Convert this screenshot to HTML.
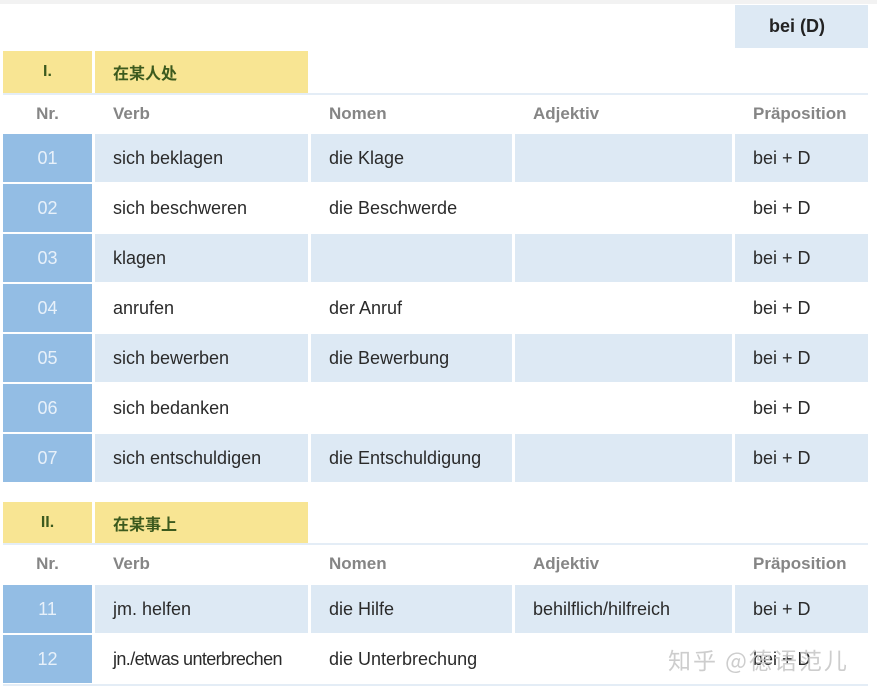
<!DOCTYPE html>
<html><head><meta charset="utf-8"><style>
body{margin:0;width:877px;height:691px;background:#fff;position:relative;overflow:hidden;font-family:"Liberation Sans","Noto Sans CJK SC",sans-serif;}
div{position:absolute;box-sizing:border-box;}
.c{display:flex;align-items:center;font-size:18px;color:#2a2a2a;padding-left:18px;}
.n{background:#93bde4;color:#e8f1fa;justify-content:center;padding:0;font-size:18px;}
.b{background:#dde9f4;}
.h{color:#858585;font-weight:bold;font-size:17px;}
.y{background:#f8e593;color:#3c5a1e;font-weight:bold;font-size:16px;}
.ln{height:2px;background:#e4edf6;}
</style></head><body>
<div style="left:0;top:0;width:877px;height:4px;background:#f2f2f2"></div>
<div class="c b" style="left:735px;top:5px;width:133px;height:43px;font-weight:bold;color:#222;padding-left:34px">bei (D)</div>

<div class="c y" style="left:3px;top:51px;width:89px;height:42px;justify-content:center;padding:0">I.</div>
<div class="c y" style="left:95px;top:51px;width:213px;height:42px">在某人处</div>
<div class="ln" style="left:3px;top:93px;width:865px"></div>
<div class="c h" style="left:3px;top:95px;width:89px;height:38px;justify-content:center;padding:0">Nr.</div>
<div class="c h" style="left:95px;top:95px;width:213px;height:38px">Verb</div>
<div class="c h" style="left:311px;top:95px;width:200px;height:38px">Nomen</div>
<div class="c h" style="left:515px;top:95px;width:217px;height:38px">Adjektiv</div>
<div class="c h" style="left:735px;top:95px;width:133px;height:38px">Präposition</div>

<div class="c n" style="left:3px;top:134px;width:89px;height:48px">01</div>
<div class="c b" style="left:95px;top:134px;width:213px;height:48px">sich beklagen</div>
<div class="c b" style="left:311px;top:134px;width:201px;height:48px">die Klage</div>
<div class="c b" style="left:515px;top:134px;width:217px;height:48px"></div>
<div class="c b" style="left:735px;top:134px;width:133px;height:48px">bei + D</div>

<div class="c n" style="left:3px;top:184px;width:89px;height:48px">02</div>
<div class="c" style="left:95px;top:184px;width:213px;height:48px">sich beschweren</div>
<div class="c" style="left:311px;top:184px;width:201px;height:48px">die Beschwerde</div>
<div class="c" style="left:735px;top:184px;width:133px;height:48px">bei + D</div>

<div class="c n" style="left:3px;top:234px;width:89px;height:48px">03</div>
<div class="c b" style="left:95px;top:234px;width:213px;height:48px">klagen</div>
<div class="c b" style="left:311px;top:234px;width:201px;height:48px"></div>
<div class="c b" style="left:515px;top:234px;width:217px;height:48px"></div>
<div class="c b" style="left:735px;top:234px;width:133px;height:48px">bei + D</div>

<div class="c n" style="left:3px;top:284px;width:89px;height:48px">04</div>
<div class="c" style="left:95px;top:284px;width:213px;height:48px">anrufen</div>
<div class="c" style="left:311px;top:284px;width:201px;height:48px">der Anruf</div>
<div class="c" style="left:735px;top:284px;width:133px;height:48px">bei + D</div>

<div class="c n" style="left:3px;top:334px;width:89px;height:48px">05</div>
<div class="c b" style="left:95px;top:334px;width:213px;height:48px">sich bewerben</div>
<div class="c b" style="left:311px;top:334px;width:201px;height:48px">die Bewerbung</div>
<div class="c b" style="left:515px;top:334px;width:217px;height:48px"></div>
<div class="c b" style="left:735px;top:334px;width:133px;height:48px">bei + D</div>

<div class="c n" style="left:3px;top:384px;width:89px;height:48px">06</div>
<div class="c" style="left:95px;top:384px;width:213px;height:48px">sich bedanken</div>
<div class="c" style="left:735px;top:384px;width:133px;height:48px">bei + D</div>

<div class="c n" style="left:3px;top:434px;width:89px;height:48px">07</div>
<div class="c b" style="left:95px;top:434px;width:213px;height:48px">sich entschuldigen</div>
<div class="c b" style="left:311px;top:434px;width:201px;height:48px">die Entschuldigung</div>
<div class="c b" style="left:515px;top:434px;width:217px;height:48px"></div>
<div class="c b" style="left:735px;top:434px;width:133px;height:48px">bei + D</div>

<div class="c y" style="left:3px;top:502px;width:89px;height:41px;justify-content:center;padding:0">II.</div>
<div class="c y" style="left:95px;top:502px;width:213px;height:41px">在某事上</div>
<div class="ln" style="left:3px;top:543px;width:865px"></div>
<div class="c h" style="left:3px;top:545px;width:89px;height:38px;justify-content:center;padding:0">Nr.</div>
<div class="c h" style="left:95px;top:545px;width:213px;height:38px">Verb</div>
<div class="c h" style="left:311px;top:545px;width:200px;height:38px">Nomen</div>
<div class="c h" style="left:515px;top:545px;width:217px;height:38px">Adjektiv</div>
<div class="c h" style="left:735px;top:545px;width:133px;height:38px">Präposition</div>

<div class="c n" style="left:3px;top:585px;width:89px;height:48px">11</div>
<div class="c b" style="left:95px;top:585px;width:213px;height:48px">jm. helfen</div>
<div class="c b" style="left:311px;top:585px;width:201px;height:48px">die Hilfe</div>
<div class="c b" style="left:515px;top:585px;width:217px;height:48px">behilflich/hilfreich</div>
<div class="c b" style="left:735px;top:585px;width:133px;height:48px">bei + D</div>

<div class="c n" style="left:3px;top:635px;width:89px;height:48px">12</div>
<div class="c" style="left:95px;top:635px;width:216px;height:48px;letter-spacing:-0.6px;white-space:nowrap">jn./etwas unterbrechen</div>
<div class="c" style="left:311px;top:635px;width:201px;height:48px">die Unterbrechung</div>
<div class="c" style="left:735px;top:635px;width:133px;height:48px">bei + D</div>
<div class="ln" style="left:3px;top:684px;width:865px"></div>
<div style="left:668px;top:642px;font-size:23px;letter-spacing:2px;color:rgba(200,200,200,0.9);font-family:'Noto Sans CJK SC',sans-serif;white-space:nowrap">知乎 @德语范儿</div>
</body></html>
